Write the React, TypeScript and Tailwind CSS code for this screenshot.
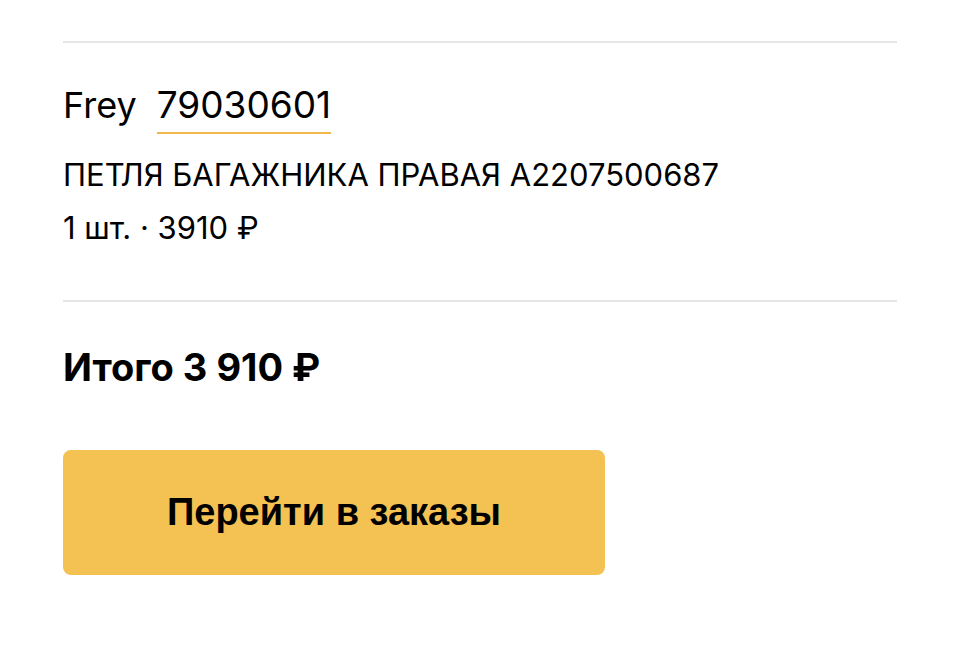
export default function App() {
  return (
    <div className="w-[960px] h-[666px] bg-white px-[63px] pt-[41px] text-black" style={{ fontFamily: "Inter, 'Noto Sans', sans-serif" }}>
      <div className="h-[2px] bg-[#e6e6e6]" />
      <div className="mt-[40px] flex items-start text-[37px] leading-[44px]">
        <span className="text-[36px]">Frey</span>
        <span className="ml-[20px] border-b-2 border-[#f1b94b] pb-[5px]">79030601</span>
      </div>
      <div className="mt-[23px] text-[31px] leading-[36px]">ПЕТЛЯ БАГАЖНИКА ПРАВАЯ A2207500687</div>
      <div className="mt-[17px] text-[31px] leading-[36px]">1 шт. · 3910 ₽</div>
      <div className="mt-[54px] h-[2px] bg-[#e6e6e6]" />
      <div className="mt-[43px] text-[38px] leading-[44px] font-bold">Итого 3 910 ₽</div>
      <button className="mt-[61px] w-[542px] h-[125px] rounded-[8px] bg-[#f4c153] flex items-center justify-center text-[38px] font-bold" style={{ fontFamily: "'Liberation Sans', Arial, sans-serif" }}>
        Перейти в заказы
      </button>
    </div>
  );
}
